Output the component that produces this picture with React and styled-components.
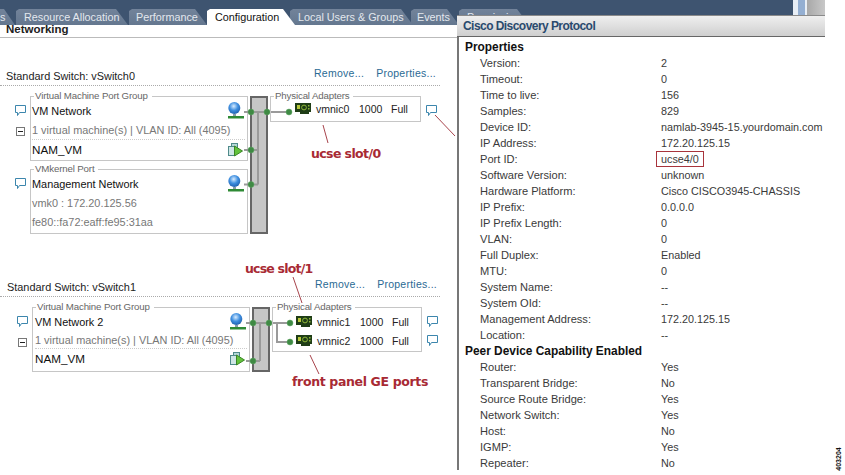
import styled, { createGlobalStyle } from 'styled-components'

const GlobalStyle = createGlobalStyle`
  html, body { margin: 0; padding: 0; background: #fff; }
  body { font-family: "Liberation Sans", Arial, sans-serif; font-size: 11.1px; color: #333; }
`

let Page = styled.div`
  position: relative;
  width: 845px;
  height: 475px;
  overflow: hidden;
  background: #fff;
`

// top strip with the tabs
let TopBand = styled.div`
  display: flex;
  align-items: flex-end;
  width: 825px;
  height: 25px;
  background: #3e5470;
`

let Tab = styled.div`
  flex: none;
  width: ${p => p.$w}px;
  height: 16px;
  margin-left: ${p => p.$gap}px;
  padding-left: ${p => p.$pad}px;
  box-sizing: border-box;
  line-height: 16px;
  white-space: nowrap;
  overflow: hidden;
  font-size: 10.8px;
  color: ${p => (p.$active ? '#111' : '#e4e8ee')};
  background: ${p => (p.$active ? '#fff' : 'linear-gradient(#72839a, #64778f)')};
  clip-path: ${p => (p.$cut
    ? 'polygon(0 0, 4px 0, 100% 100%, 0 100%)'
    : 'polygon(0 100%, 0 2px, 3px 0, calc(100% - 12px) 0, 100% 100%)')};
  z-index: ${p => (p.$active ? 1 : 0)};
`

let ScrollStrip = styled.div`
  position: absolute;
  top: 0;
  left: 793px;
  width: 32px;
  height: 15px;
  display: flex;
`

let ScrollPart = styled.div`
  width: ${p => p.$w}px;
  background: ${p => p.$bg};
`

let LeftPane = styled.div`
  width: 459px;
  height: 445px;
  box-sizing: border-box;
  border-right: 2px solid #777;
`

let Heading = styled.div`
  height: 13px;
  box-sizing: border-box;
  padding-left: 6px;
  border-bottom: 1px solid #bbb;
  overflow: hidden;
  font-size: 11.5px;
  line-height: 8px;
  font-weight: 700;
  color: #222;
`

let SwitchHead = styled.div`
  display: flex;
  align-items: flex-end;
  justify-content: space-between;
  height: ${p => p.$h}px;
  box-sizing: border-box;
  padding: 0 ${p => 4 - p.$shift}px 1px ${p => 6 + p.$shift}px;
  border-bottom: 1px dotted #aaa;
  margin-right: 17px;
  font-size: 10.9px;
  color: #222;
`

let SwitchTitle = styled.span`
  line-height: 16px;
`

let Links = styled.span`
  display: flex;
  gap: 12px;
  margin: 0 0 3px;
  font-size: 10.5px;
  color: #2a6a94;
  letter-spacing: 0.25px;
  line-height: 16px;
`

let SwitchBody = styled.div`
  display: flex;
  margin-top: 10px;
  padding-left: ${p => 15 + p.$shift}px;
`

let SideIcons = styled.div`
  width: 15px;
  flex: none;
  display: flex;
  flex-direction: column;
  gap: 11px;
  padding-top: 9px;
`

let Stack = styled.div`
  display: flex;
  flex-direction: column;
  gap: 8px;
`

let GroupLine = styled.div`
  display: flex;
`

let Box = styled.div`
  position: relative;
  width: ${p => p.$w}px;
  height: ${p => p.$h}px;
  box-sizing: border-box;
  border: 1px solid #c6c6c6;
  padding: ${p => p.$top}px 2px 0 ${p => p.$left}px;
`

let Legend = styled.span`
  position: absolute;
  top: -8px;
  left: 3px;
  padding: 0 4px 0 1px;
  background: #fff;
  font-size: 9.7px;
  letter-spacing: -0.15px;
  line-height: 13px;
  color: #666;
  white-space: nowrap;
`

let Row = styled.div`
  display: flex;
  align-items: center;
  justify-content: space-between;
  height: ${p => p.$h}px;
  font-size: ${p => (p.$large ? 11.7 : 10.9)}px;
  color: ${p => (p.$muted ? '#777' : '#111')};
  border-top: ${p => (p.$dotted ? '1px dotted #ccc' : 'none')};
  box-sizing: border-box;
  white-space: nowrap;
`

let Bar = styled.div`
  position: relative;
  flex: none;
  width: 18px;
  height: ${p => p.$h}px;
  margin: 0 2px;
  box-sizing: border-box;
  border: 2px solid #666;
  background: #c6c6c6;
`

let Wires = styled.svg`
  position: absolute;
  left: -10px;
  top: -2px;
  overflow: visible;
`

let AdapterColumn = styled.div`
  display: flex;
`

let AdapterRow = styled.div`
  display: flex;
  align-items: center;
  height: 19px;
  padding-left: ${p => p.$pad}px;
  font-size: 10.5px;
  color: #222;
`

let NicName = styled.span`
  width: 43px;
  margin-left: 5px;
`

let Speed = styled.span`
  width: 32px;
`

let RightIcons = styled.div`
  display: flex;
  flex-direction: column;
  gap: 8px;
  padding: 9px 0 0 5px;
`

// overlay panel on the right
let Panel = styled.div`
  position: absolute;
  top: 15px;
  left: 457px;
  width: 368px;
  height: 455px;
  background: #fff;
  border-left: 2px solid #777;
  box-sizing: border-box;
`

let PanelTitle = styled.div`
  height: 22px;
  box-sizing: border-box;
  background: linear-gradient(#efefef, #cfcfcf);
  border-top: 1px solid #8a8a8a;
  border-bottom: 1px solid #666;
  margin-left: -2px;
  padding-left: 6px;
  font-size: 12px;
  font-weight: 700;
  line-height: 20px;
  letter-spacing: -0.55px;
  color: #2a4a6e;
`

let PanelBody = styled.div`
  padding: 2px 0 0 6px;
`

let Section = styled.div`
  height: 16px;
  line-height: 16px;
  font-size: 11.9px;
  font-weight: 700;
  color: #111;
`

let PropRow = styled.div`
  display: grid;
  grid-template-columns: 181px 1fr;
  height: 16px;
  padding-left: 15px;
  line-height: 16px;
  white-space: nowrap;
  color: #3a3a3a;
`

let Value = styled.span`
  font-size: 10.8px;
`

let Marked = styled(Value)`
  justify-self: start;
  margin-left: -5px;
  padding: 0 4px;
  height: 16px;
  line-height: 14px;
  box-sizing: border-box;
  border: 1px solid #a8343c;
`

let Note = styled.span`
  position: absolute;
  left: ${p => p.$x}px;
  top: ${p => p.$y}px;
  font-family: "DejaVu Sans", sans-serif;
  font-size: 12.5px;
  font-weight: 700;
  line-height: 16px;
  letter-spacing: ${p => p.$track}px;
  white-space: nowrap;
  color: #a82a34;
`

let NoteLines = styled.svg`
  position: absolute;
  left: 0;
  top: 0;
  pointer-events: none;
`

let FigureId = styled.span`
  position: absolute;
  left: 827px;
  top: 455px;
  font-size: 7px;
  line-height: 8px;
  font-weight: 700;
  color: #111;
  transform: rotate(-90deg);
`

let IconSvg = styled.svg`
  display: block;
  flex: none;
  margin-left: ${p => p.$ml || 0}px;
  margin-right: ${p => p.$mr || 0}px;
`

function Bubble() {
  return (
    <IconSvg width="11" height="11" viewBox="0 0 11 11">
      <path d="M.5 .5h10v7H4.5L2.5 10.5v-3H.5z" fill="#fff" stroke="#3c86ad" />
    </IconSvg>
  )
}

function MinusBox() {
  return (
    <IconSvg width="9" height="9" viewBox="0 0 9 9" $ml={1}>
      <rect x=".5" y=".5" width="8" height="8" fill="#fff" stroke="#777" />
      <path d="M2 4.5h5" stroke="#222" />
    </IconSvg>
  )
}

function Globe() {
  return (
    <IconSvg width="16" height="17" viewBox="0 0 16 17" $mr={1}>
      <defs>
        <radialGradient id="gl" cx=".45" cy=".35" r=".7">
          <stop offset="0" stopColor="#d8ecff" />
          <stop offset=".5" stopColor="#3f8fe0" />
          <stop offset="1" stopColor="#1c5aa8" />
        </radialGradient>
      </defs>
      <circle cx="6.3" cy="6" r="6" fill="url(#gl)" />
      <path d="M5 12h3v2H5z" fill="#8a9aa8" />
      <path d="M0 14h16v2.5H0z" fill="#2f8a35" />
    </IconSvg>
  )
}

function VmIcon() {
  return (
    <IconSvg width="15" height="14" viewBox="0 0 15 14" $mr={2}>
      <rect x="3.5" y=".5" width="6" height="6" fill="#b5d8d8" stroke="#4f8a8a" />
      <rect x=".5" y="3.5" width="6" height="9" fill="#cfe6e6" stroke="#4f8a8a" />
      <path d="M6.5 3v10l8-5z" fill="#63c23c" stroke="#3a8526" />
    </IconSvg>
  )
}

function NicIcon() {
  return (
    <IconSvg width="16" height="13" viewBox="0 0 16 13">
      <path d="M0 1h16v9h-2v2H5v-2H0z" fill="#1f3d16" />
      <path d="M2 3h3v4H2z" fill="#b7c83c" />
      <circle cx="9" cy="5.5" r="2.4" fill="none" stroke="#8fb83a" />
      <path d="M13 3h1.5v1.5H13zM13 6h1.5v1.5H13z" fill="#8fb83a" />
    </IconSvg>
  )
}

function Dot({ x, y }) {
  return <circle cx={x} cy={y} r="3" fill="#3f8a44" stroke="#5fa864" strokeWidth=".5" />
}

const props1 = [
  ['Version:', '2'],
  ['Timeout:', '0'],
  ['Time to live:', '156'],
  ['Samples:', '829'],
  ['Device ID:', 'namlab-3945-15.yourdomain.com'],
  ['IP Address:', '172.20.125.15'],
  ['Port ID:', 'ucse4/0', true],
  ['Software Version:', 'unknown'],
  ['Hardware Platform:', 'Cisco CISCO3945-CHASSIS'],
  ['IP Prefix:', '0.0.0.0'],
  ['IP Prefix Length:', '0'],
  ['VLAN:', '0'],
  ['Full Duplex:', 'Enabled'],
  ['MTU:', '0'],
  ['System Name:', '--'],
  ['System OId:', '--'],
  ['Management Address:', '172.20.125.15'],
  ['Location:', '--'],
]

const props2 = [
  ['Router:', 'Yes'],
  ['Transparent Bridge:', 'No'],
  ['Source Route Bridge:', 'Yes'],
  ['Network Switch:', 'Yes'],
  ['Host:', 'No'],
  ['IGMP:', 'Yes'],
  ['Repeater:', 'No'],
]

function Props({ rows }) {
  return rows.map(([k, v, marked]) => (
    <PropRow key={k}>
      <span>{k}</span>
      {marked ? <Marked>{v}</Marked> : <Value>{v}</Value>}
    </PropRow>
  ))
}

function Adapter({ name, pad }) {
  return (
    <AdapterRow $pad={pad}>
      <NicIcon />
      <NicName>{name}</NicName>
      <Speed>1000</Speed>
      <span>Full</span>
    </AdapterRow>
  )
}

export default function App() {
  return (
    <Page>
      <GlobalStyle />
      <TopBand>
        <Tab $w={15} $pad={0} $gap={0} $cut>s</Tab>
        <Tab $w={112} $pad={8} $gap={1}>Resource Allocation</Tab>
        <Tab $w={78} $pad={7} $gap={1}>Performance</Tab>
        <Tab $w={88} $pad={8} $gap={0} $active>Configuration</Tab>
        <Tab $w={123} $pad={8} $gap={-5}>Local Users &amp; Groups</Tab>
        <Tab $w={48} $pad={6} $gap={-2}>Events</Tab>
        <Tab $w={70} $pad={8} $gap={0}>Permissions</Tab>
      </TopBand>
      <ScrollStrip>
        <ScrollPart $w={5} $bg="#e8eef5" />
        <ScrollPart $w={7} $bg="#94afd2" />
        <ScrollPart $w={2} $bg="#e8eef5" />
        <ScrollPart $w={18} $bg="linear-gradient(90deg, #a8a8a8, #c8c8c8)" />
      </ScrollStrip>

      <LeftPane>
        <Heading>Networking</Heading>

        <SwitchHead $h={48} $shift={0}>
          <SwitchTitle>Standard Switch: vSwitch0</SwitchTitle>
          <Links><span>Remove...</span><span>Properties...</span></Links>
        </SwitchHead>
        <SwitchBody $shift={0}>
          <Stack>
            <GroupLine>
              <SideIcons><Bubble /><MinusBox /></SideIcons>
              <Box $w={218} $h={65} $top={4} $left={1}>
                <Legend>Virtual Machine Port Group</Legend>
                <Row $h={19}>VM Network<Globe /></Row>
                <Row $h={19} $muted>1 virtual machine(s) | VLAN ID: All (4095)</Row>
                <Row $h={20} $dotted $large>NAM_VM<VmIcon /></Row>
              </Box>
            </GroupLine>
            <GroupLine>
              <SideIcons><Bubble /></SideIcons>
              <Box $w={218} $h={65} $top={4} $left={1}>
                <Legend>VMkernel Port</Legend>
                <Row $h={19}>Management Network<Globe /></Row>
                <Row $h={19} $muted>vmk0 : 172.20.125.56</Row>
                <Row $h={19} $muted>fe80::fa72:eaff:fe95:31aa</Row>
              </Box>
            </GroupLine>
          </Stack>
          <Bar $h={138}>
            <Wires width="60" height="138">
              <path d="M2 16H47M2 54H16M2 88.5H16M16 16V88.5" stroke="#9a9a9a" strokeWidth="2" fill="none" />
              <Dot x={9} y={16} /><Dot x={9} y={54} /><Dot x={9} y={88.5} />
              <Dot x={25} y={16} /><Dot x={47} y={16} />
            </Wires>
          </Bar>
          <AdapterColumn>
            <Box $w={151} $h={26} $top={2} $left={0}>
              <Legend>Physical Adapters</Legend>
              <Adapter name="vmnic0" pad={24} />
            </Box>
            <RightIcons><Bubble /></RightIcons>
          </AdapterColumn>
        </SwitchBody>

        <SwitchHead $h={63} $shift={1}>
          <SwitchTitle>Standard Switch: vSwitch1</SwitchTitle>
          <Links><span>Remove...</span><span>Properties...</span></Links>
        </SwitchHead>
        <SwitchBody $shift={2}>
          <Stack>
            <GroupLine>
              <SideIcons><Bubble /><MinusBox /></SideIcons>
              <Box $w={218} $h={65} $top={4} $left={2}>
                <Legend>Virtual Machine Port Group</Legend>
                <Row $h={19}>VM Network 2<Globe /></Row>
                <Row $h={17} $muted>1 virtual machine(s) | VLAN ID: All (4095)</Row>
                <Row $h={20} $dotted $large>NAM_VM<VmIcon /></Row>
              </Box>
            </GroupLine>
          </Stack>
          <Bar $h={65}>
            <Wires width="60" height="65">
              <path d="M2 16H46M2 54H16M16 16V54M33 16V35H46" stroke="#9a9a9a" strokeWidth="2" fill="none" />
              <Dot x={9} y={16} /><Dot x={9} y={54} />
              <Dot x={25} y={16} /><Dot x={46} y={16} /><Dot x={46} y={35} />
            </Wires>
          </Bar>
          <AdapterColumn>
            <Box $w={150} $h={45} $top={4} $left={0}>
              <Legend>Physical Adapters</Legend>
              <Adapter name="vmnic1" pad={23} />
              <Adapter name="vmnic2" pad={23} />
            </Box>
            <RightIcons><Bubble /><Bubble /></RightIcons>
          </AdapterColumn>
        </SwitchBody>
      </LeftPane>

      <Panel>
        <PanelTitle>Cisco Discovery Protocol</PanelTitle>
        <PanelBody>
          <Section>Properties</Section>
          <Props rows={props1} />
          <Section>Peer Device Capability Enabled</Section>
          <Props rows={props2} />
        </PanelBody>
      </Panel>

      <NoteLines width="845" height="475" fill="none" stroke="#a8444c">
        <path d="M323 125L328 143" />
        <path d="M435 115L455 136" />
        <path d="M293 277L302 303" />
        <path d="M310 355L319 374" />
      </NoteLines>
      <Note $x={311} $y={146} $track={-0.6}>ucse slot/0</Note>
      <Note $x={245} $y={261} $track={-0.8}>ucse slot/1</Note>
      <Note $x={292} $y={374} $track={-0.35}>front panel GE ports</Note>
      <FigureId>403204</FigureId>
    </Page>
  )
}
